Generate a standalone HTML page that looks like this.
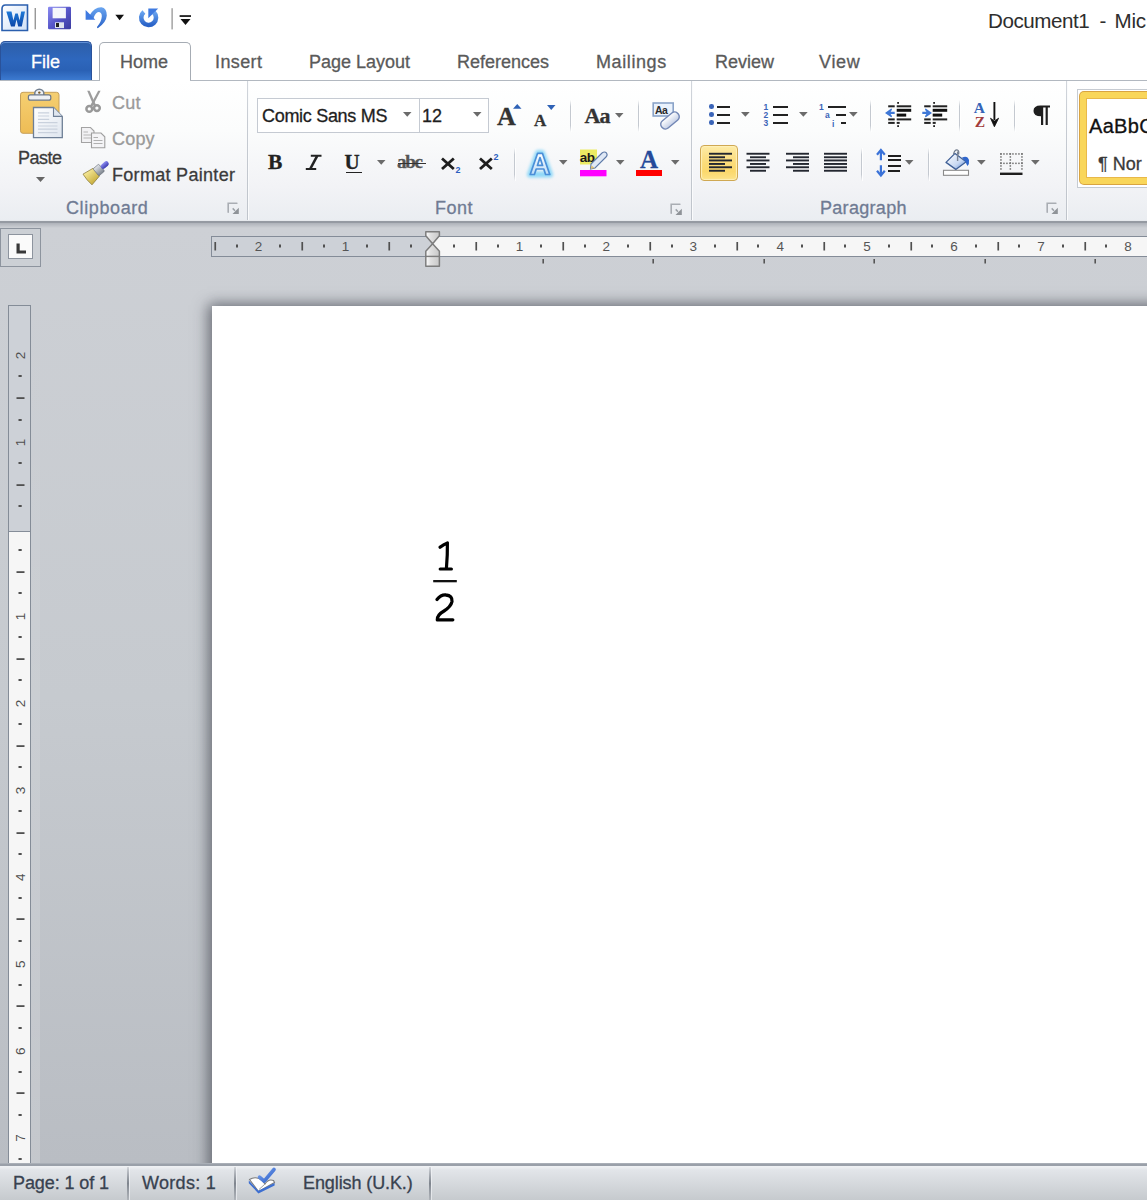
<!DOCTYPE html>
<html><head><meta charset="utf-8">
<style>
html,body{margin:0;padding:0;}
body{width:1147px;height:1200px;position:relative;overflow:hidden;background:#fff;font-family:"Liberation Sans",sans-serif;}
.a{position:absolute;}
.t{position:absolute;white-space:pre;line-height:1;font-size:18px;-webkit-text-stroke:0.3px currentColor;}
svg{position:absolute;overflow:visible;}
</style></head><body>

<!-- ===== TITLE BAR ===== -->
<div class="a" style="left:0;top:0;width:1147px;height:41px;background:#fff;"></div>
<svg style="left:0;top:0" width="200" height="40">
<defs>
<linearGradient id="wbg" x1="0" y1="0" x2="1" y2="1"><stop offset="0" stop-color="#ffffff"/><stop offset="1" stop-color="#cfe0f7"/></linearGradient>
<linearGradient id="wW" x1="0" y1="0" x2="0" y2="1"><stop offset="0" stop-color="#1f7ad8"/><stop offset="1" stop-color="#0d47a8"/></linearGradient>
<linearGradient id="sav" x1="0" y1="0" x2="1" y2="1"><stop offset="0" stop-color="#8c8cf2"/><stop offset="0.5" stop-color="#5757c9"/><stop offset="1" stop-color="#3a3a9e"/></linearGradient>
<linearGradient id="und" x1="0" y1="0" x2="0" y2="1"><stop offset="0" stop-color="#6aa5f0"/><stop offset="1" stop-color="#2a63c8"/></linearGradient>
</defs>
<path d="M5.5 5 H27.5 V30.5 H2 V9 Q2 5 5.5 5 Z" fill="url(#wbg)" stroke="#2b5fae" stroke-width="1.6"/>
<path d="M6.3 11.5 H11.5 L13.4 20.5 L15.3 13.5 H17.8 L19.6 20.5 L21.2 11.5 H25 L21.8 26.5 H18.2 L16.5 19.5 L14.8 26.5 H11 Z" fill="url(#wW)"/>
<rect x="34.6" y="8" width="1.3" height="21.3" fill="#8e8e8e"/>
<rect x="48" y="6.8" width="23" height="22.5" rx="1.2" fill="url(#sav)"/>
<rect x="52.6" y="7.8" width="13.3" height="10.5" fill="#f4f6fb"/>
<rect x="55" y="22.3" width="9" height="5.8" fill="#dfe3ee"/>
<rect x="56" y="23" width="3" height="4" fill="#222"/>
<path d="M89.5 15.5 Q94.5 7 101.5 7.3 Q106.8 8 106.8 15.5 Q106.3 22.5 97.8 28.2 Q96.8 28 97 27 Q101.5 21.5 101.8 16.5 Q101.9 12.2 98.5 12 Q95.5 12 93.5 18.5 Z" fill="url(#und)"/>
<path d="M85.6 10 V19.8 H95.4 Z" fill="#3f7ae0"/>
<path d="M115.3 14.7 H124 L119.65 20.2 Z" fill="#111"/>
<path d="M143.9 11.9 A7.4 7.4 0 1 0 153.9 12.4" fill="none" stroke="url(#und)" stroke-width="4.6"/>
<path d="M148.3 8.6 H158.2 L148.3 18.2 Z" fill="#3f7ae0"/>
<rect x="171.5" y="8.2" width="1.2" height="21.2" fill="#8e8e8e"/>
<rect x="179.6" y="15.2" width="11.4" height="1.7" fill="#111"/>
<path d="M180.5 19 H190.5 L185.5 25 Z" fill="#111"/>
</svg>
<div class="t" style="left:988px;top:11px;font-size:20.6px;color:#2e2e2e;letter-spacing:-0.45px;-webkit-text-stroke:0;">Document1</div>
<div class="t" style="left:1099.5px;top:11px;font-size:20.6px;color:#2e2e2e;-webkit-text-stroke:0;">-</div>
<div class="t" style="left:1114.5px;top:11px;font-size:20.6px;color:#2e2e2e;letter-spacing:-0.2px;-webkit-text-stroke:0;">Mic</div>


<!-- ===== TABS ===== -->
<div class="a" style="left:0;top:41px;width:92px;height:39px;border-radius:5px 5px 0 0;background:linear-gradient(#2d5ea8 0%,#2e67bd 45%,#2a61b5 75%,#3c7ad0 100%);box-shadow:inset 0 1px 0 #5f8fd6;border:1px solid #2a529a;border-bottom:none;box-sizing:border-box;"></div>
<div class="t" style="left:31px;top:53px;font-size:18px;color:#ffffff;">File</div>
<div class="a" style="left:99px;top:42px;width:92px;height:39px;border-radius:5px 5px 0 0;background:#fff;border:1px solid #a6acb4;border-bottom:none;box-sizing:border-box;"></div>
<div class="t" style="left:120px;top:53px;font-size:18px;color:#5a5a5a;">Home</div>
<div class="t" style="left:215px;top:53px;font-size:18px;color:#5a5a5a;letter-spacing:0.4px;">Insert</div>
<div class="t" style="left:309px;top:53px;font-size:18px;color:#5a5a5a;letter-spacing:0px;">Page Layout</div>
<div class="t" style="left:457px;top:53px;font-size:18px;color:#5a5a5a;letter-spacing:0px;">References</div>
<div class="t" style="left:596px;top:53px;font-size:18px;color:#5a5a5a;letter-spacing:0.6px;">Mailings</div>
<div class="t" style="left:715px;top:53px;font-size:18px;color:#5a5a5a;letter-spacing:0px;">Review</div>
<div class="t" style="left:819px;top:53px;font-size:18px;color:#5a5a5a;letter-spacing:0.7px;">View</div>


<!-- ===== RIBBON ===== -->
<div class="a" style="left:0;top:80px;width:1147px;height:141px;background:linear-gradient(#ffffff 0%,#fbfcfc 35%,#f2f3f6 75%,#eaedf1 100%);border-top:1px solid #b2b8c0;box-sizing:border-box;"></div>
<div class="a" style="left:100px;top:79px;width:90px;height:2px;background:#fff;"></div>
<div class="a" style="left:0;top:220px;width:1147px;height:1px;background:#e6e9ed;"></div>
<div class="a" style="left:0;top:221px;width:1147px;height:2px;background:#959aa2;"></div>
<div class="a" style="left:0;top:223px;width:1147px;height:5px;background:linear-gradient(#aeb2b9,#cdd0d5);"></div>
<div class="a" style="left:247px;top:81px;width:1px;height:139px;background:linear-gradient(#d2d6dc,#c6cbd2 30%,#bfc4cb);"></div><div class="a" style="left:248px;top:81px;width:1px;height:139px;background:#fafbfc;"></div>
<div class="a" style="left:691px;top:81px;width:1px;height:139px;background:linear-gradient(#d2d6dc,#c6cbd2 30%,#bfc4cb);"></div><div class="a" style="left:692px;top:81px;width:1px;height:139px;background:#fafbfc;"></div>
<div class="a" style="left:1066px;top:81px;width:1px;height:139px;background:linear-gradient(#d2d6dc,#c6cbd2 30%,#bfc4cb);"></div><div class="a" style="left:1067px;top:81px;width:1px;height:139px;background:#fafbfc;"></div>
<svg style="left:0;top:85px" width="80" height="60">
<defs><linearGradient id="clp" x1="0" y1="0" x2="0" y2="1"><stop offset="0" stop-color="#f5cf72"/><stop offset="1" stop-color="#eebc55"/></linearGradient>
<linearGradient id="pap" x1="0" y1="0" x2="1" y2="1"><stop offset="0" stop-color="#ffffff"/><stop offset="1" stop-color="#dfe6ef"/></linearGradient></defs>
<rect x="20.5" y="7.3" width="38.5" height="41" rx="2.5" fill="url(#clp)" stroke="#c6a05a" stroke-width="1"/>
<circle cx="39.3" cy="8.9" r="4.6" fill="#eef1f5" stroke="#738091" stroke-width="1.5"/>
<rect x="28.4" y="9.9" width="22.4" height="5.3" rx="2" fill="#eef1f5" stroke="#6c7889" stroke-width="1.2"/>
<circle cx="39.3" cy="7.6" r="1.2" fill="#7a5a2a"/>
<path d="M33.5 22.5 H53.5 L62.3 31.4 V52.6 H33.5 Z" fill="url(#pap)" stroke="#6e7f96" stroke-width="1.3"/>
<path d="M53.5 22.5 V31.4 H62.3" fill="#dfe6ef" stroke="#6e7f96" stroke-width="1.1"/>
<path d="M38 27.8 H49.2 M38 31 H49.2 M38 34.4 H49.2 M38 37.7 H57.5 M38 41 H57.5 M38 44.2 H57.5 M38 47.6 H57.5" stroke="#c9d1dd" stroke-width="1.2"/>
</svg>
<div class="t" style="left:18px;top:149px;font-size:18px;color:#3b3b3b;letter-spacing:-0.5px;">Paste</div>
<svg style="left:35.5px;top:176.5px" width="9" height="5"><path d="M0 0 H9 L4.5 5 Z" fill="#666"/></svg>
<svg style="left:76px;top:86px" width="36" height="104">
<defs><linearGradient id="brs" x1="0" y1="0" x2="0" y2="1"><stop offset="0" stop-color="#f7ea9a"/><stop offset="1" stop-color="#c8ae3c"/></linearGradient>
<linearGradient id="fer" x1="0" y1="0" x2="0" y2="1"><stop offset="0" stop-color="#e4e7ec"/><stop offset="1" stop-color="#7d848e"/></linearGradient>
<linearGradient id="hdl" x1="0" y1="0" x2="0" y2="1"><stop offset="0" stop-color="#8c8cf0"/><stop offset="1" stop-color="#3d3db0"/></linearGradient></defs>
<path d="M11.2 4.8 H13.6 L20.2 19.5 L17.8 20.2 Z" fill="#9c9c9c"/>
<path d="M22.2 4.8 H24.6 L16.4 20.5 L14.2 19.5 Z" fill="#9c9c9c"/>
<circle cx="13.3" cy="22.9" r="2.9" fill="none" stroke="#999" stroke-width="2.5"/>
<circle cx="20.9" cy="22.1" r="2.9" fill="none" stroke="#999" stroke-width="2.5"/>
<path d="M5.5 41.5 H14.5 L18 45 V56.5 H5.5 Z" fill="#f2f2f4" stroke="#a3a3a3" stroke-width="1.1"/>
<path d="M7.5 46 H12 M7.5 49 H15.5 M7.5 52 H15.5" stroke="#b5b5b5" stroke-width="1.2"/>
<path d="M15.5 47 H25 L28.8 50.8 V61.8 H15.5 Z" fill="#f4f4f6" stroke="#9e9e9e" stroke-width="1.1"/>
<path d="M17.5 51.5 H22 M17.5 54.5 H26.5 M17.5 57.5 H26.5" stroke="#b0b0b0" stroke-width="1.2"/>
<g transform="translate(11.5 93.5) rotate(-40)">
<path d="M0 -7 L11.5 -5 L11.5 5 L0 7 Q-1 0 0 -7 Z" fill="url(#brs)" stroke="#8a7a38" stroke-width="0.7"/>
<rect x="11" y="-4.6" width="7.5" height="9.2" rx="1" fill="url(#fer)" stroke="#666c75" stroke-width="0.6"/>
<rect x="18" y="-2.5" width="9" height="5" rx="2.5" fill="url(#hdl)"/>
</g>
</svg>
<div class="t" style="left:112px;top:94px;font-size:18px;color:#9a9a9a;letter-spacing:0.3px;">Cut</div>
<div class="t" style="left:112px;top:130px;font-size:18px;color:#9a9a9a;letter-spacing:0.2px;">Copy</div>
<div class="t" style="left:112px;top:166px;font-size:18px;color:#3b3b3b;letter-spacing:0.3px;">Format Painter</div>
<div class="t" style="left:66px;top:199px;font-size:18px;color:#6f7b93;letter-spacing:0.6px;">Clipboard</div>
<svg style="left:227px;top:202px" width="14" height="14"><path d="M1.2 10.2 V1.3 H9.9" fill="none" stroke="#a9adb3" stroke-width="1.6" stroke-linecap="round"/><path d="M5.7 6.4 L8 8.7" stroke="#9ba0a6" stroke-width="1.5"/><path d="M5.5 12 L11.8 5.7 V12 Z" fill="#8f9398"/></svg>
<div class="a" style="left:257px;top:98px;width:232px;height:35px;border:1px solid #c5cad2;box-sizing:border-box;background:#fff;"></div>
<div class="a" style="left:419px;top:98px;width:1px;height:35px;background:#c5cad2;"></div>
<div class="t" style="left:262px;top:107px;font-size:18px;color:#1e1e1e;letter-spacing:-0.3px;">Comic Sans MS</div>
<svg style="left:402.5px;top:112px" width="8.5" height="4.8"><path d="M0 0 H8.5 L4.25 4.8 Z" fill="#6b6b6b"/></svg>
<div class="t" style="left:422px;top:107px;font-size:18px;color:#1e1e1e;">12</div>
<svg style="left:472.5px;top:112px" width="8.5" height="4.8"><path d="M0 0 H8.5 L4.25 4.8 Z" fill="#6b6b6b"/></svg>
<div class="t" style="left:497px;top:104px;font-family:'Liberation Serif';font-size:26px;font-weight:bold;color:#333;">A</div>
<svg style="left:513px;top:103.5px" width="9" height="5"><path d="M0 4.8 H8.5 L4.25 0 Z" fill="#2f62b6"/></svg>
<div class="t" style="left:534px;top:112px;font-family:'Liberation Serif';font-size:17px;font-weight:bold;color:#333;">A</div>
<svg style="left:547px;top:105px" width="9" height="5"><path d="M0 0 H8.5 L4.25 5 Z" fill="#2f62b6"/></svg>
<div class="a" style="left:570px;top:100px;width:1px;height:32px;background:linear-gradient(rgba(200,205,212,0),#c4c9d0 20%,#c4c9d0 80%,rgba(200,205,212,0));"></div><div class="a" style="left:571px;top:100px;width:1px;height:32px;background:rgba(255,255,255,0.8);"></div>
<div class="t" style="left:584.5px;top:105px;font-family:'Liberation Serif';font-size:22px;font-weight:bold;color:#333;letter-spacing:-1px;">Aa</div>
<svg style="left:615px;top:112.5px" width="8.5" height="4.8"><path d="M0 0 H8.5 L4.25 4.8 Z" fill="#6b6b6b"/></svg>
<div class="a" style="left:638px;top:100px;width:1px;height:32px;background:linear-gradient(rgba(200,205,212,0),#c4c9d0 20%,#c4c9d0 80%,rgba(200,205,212,0));"></div><div class="a" style="left:639px;top:100px;width:1px;height:32px;background:rgba(255,255,255,0.8);"></div>
<svg style="left:650px;top:100px" width="34" height="32">
<defs><linearGradient id="ers" x1="0" y1="0" x2="0" y2="1"><stop offset="0" stop-color="#ffffff"/><stop offset="1" stop-color="#c4cfe6"/></linearGradient></defs>
<rect x="3.2" y="3" width="20" height="13" fill="#eaf2fc" stroke="#8aa3c8" stroke-width="1.6"/>
<text x="5" y="13.8" font-family="Liberation Sans" font-size="10.5" font-weight="bold" fill="#2a2a2a" letter-spacing="-0.5">Aa</text>
<g transform="translate(20 20.5) rotate(-40)"><rect x="-10.5" y="-4.6" width="21" height="9.2" rx="4.2" fill="url(#ers)" stroke="#7287b5" stroke-width="1.4"/></g>
</svg>
<div class="t" style="left:268px;top:152px;font-family:'Liberation Serif';font-size:21.5px;font-weight:bold;color:#222;">B</div>
<svg style="left:300px;top:150px" width="30" height="26"><path d="M10.8 5.8 H21.5 M5.8 19 H16.2" stroke="#222" stroke-width="2"/><path d="M17.2 5.8 L10.2 19" stroke="#222" stroke-width="2.6"/></svg>
<div class="t" style="left:344.5px;top:152px;font-family:'Liberation Serif';font-size:21px;font-weight:bold;color:#222;">U</div>
<div class="a" style="left:346px;top:171.5px;width:15.5px;height:1.8px;background:#222;"></div>
<svg style="left:377px;top:160px" width="8.5" height="4.8"><path d="M0 0 H8.5 L4.25 4.8 Z" fill="#6b6b6b"/></svg>
<div class="t" style="left:397px;top:151.5px;font-family:'Liberation Serif';font-size:19px;font-weight:bold;color:#555;letter-spacing:-1.3px;">abc</div>
<div class="a" style="left:398px;top:162.5px;width:28px;height:1.6px;background:#333;"></div>
<svg style="left:430px;top:148px" width="80" height="30">
<path d="M12 10.5 L23.8 21 M23.8 10.5 L12 21" stroke="#1e1e1e" stroke-width="2.8"/>
<path d="M50 10.5 L61.8 21 M61.8 10.5 L50 21" stroke="#1e1e1e" stroke-width="2.8"/>
<text x="25.5" y="25" font-family="Liberation Sans" font-size="9" font-weight="bold" fill="#2b5fc0">2</text>
<text x="63.5" y="12" font-family="Liberation Sans" font-size="9" font-weight="bold" fill="#2b5fc0">2</text>
</svg>
<div class="a" style="left:514px;top:148px;width:1px;height:33px;background:linear-gradient(rgba(200,205,212,0),#c4c9d0 20%,#c4c9d0 80%,rgba(200,205,212,0));"></div><div class="a" style="left:515px;top:148px;width:1px;height:33px;background:rgba(255,255,255,0.8);"></div>
<svg style="left:525px;top:148px" width="34" height="32">
<defs><filter id="glow" x="-40%" y="-40%" width="180%" height="180%"><feGaussianBlur stdDeviation="1.8"/></filter>
<linearGradient id="tef" x1="0" y1="0" x2="0" y2="1"><stop offset="0" stop-color="#ffffff"/><stop offset="1" stop-color="#bcdcf7"/></linearGradient></defs>
<path d="M5 26.5 L13 5 H17 L25 26.5 Z" fill="none" stroke="#8fd8f8" stroke-width="6" filter="url(#glow)" stroke-linejoin="round"/>
<path d="M5.2 26.5 L12.6 5.3 H17.4 L24.8 26.5 H20.6 L18.8 21 H11.2 L9.4 26.5 Z M12.4 17.4 H17.6 L15 9.6 Z" fill="url(#tef)" fill-rule="evenodd" stroke="#4b8fd8" stroke-width="1.7" stroke-linejoin="round"/>
</svg>
<svg style="left:558.5px;top:160px" width="8.5" height="4.8"><path d="M0 0 H8.5 L4.25 4.8 Z" fill="#6b6b6b"/></svg>
<svg style="left:578px;top:148px" width="32" height="30">
<rect x="2" y="1.5" width="17" height="15" fill="#ebeb62"/>
<text x="1.8" y="14.2" font-family="Liberation Sans" font-size="13.5" font-weight="bold" fill="#1a1a1a" letter-spacing="-0.6">ab</text>
<path d="M13 16 L24 5 Q26.5 3 28.5 5 Q30 7 28 9 L17 20 L12.5 21 Z" fill="#dfe8f5" stroke="#5e7aa8" stroke-width="1.1"/>
<path d="M12.5 21 L13.5 17.5 L16.5 20 Z" fill="#e0c070"/>
<rect x="2" y="22" width="26.5" height="6.3" fill="#ff00ff"/>
</svg>
<svg style="left:616px;top:160px" width="8.5" height="4.8"><path d="M0 0 H8.5 L4.25 4.8 Z" fill="#6b6b6b"/></svg>
<div class="t" style="left:640px;top:147px;font-family:'Liberation Serif';font-size:25px;font-weight:bold;color:#254a9a;">A</div>
<div class="a" style="left:636px;top:170px;width:26px;height:6.3px;background:#f00;"></div>
<svg style="left:670.5px;top:160px" width="8.5" height="4.8"><path d="M0 0 H8.5 L4.25 4.8 Z" fill="#6b6b6b"/></svg>
<div class="t" style="left:435px;top:199px;font-size:18px;color:#6f7b93;letter-spacing:0.5px;">Font</div>
<svg style="left:670px;top:203px" width="14" height="14"><path d="M1.2 10.2 V1.3 H9.9" fill="none" stroke="#a9adb3" stroke-width="1.6" stroke-linecap="round"/><path d="M5.7 6.4 L8 8.7" stroke="#9ba0a6" stroke-width="1.5"/><path d="M5.5 12 L11.8 5.7 V12 Z" fill="#8f9398"/></svg>
<div class="a" style="left:709px;top:104.0px;width:4.5px;height:4.5px;border-radius:50%;background:#3a64b8;"></div><div class="a" style="left:709px;top:112.0px;width:4.5px;height:4.5px;border-radius:50%;background:#3a64b8;"></div><div class="a" style="left:709px;top:120.0px;width:4.5px;height:4.5px;border-radius:50%;background:#3a64b8;"></div><div class="a" style="left:717px;top:105.7px;width:13px;height:2.2px;background:#222;"></div><div class="a" style="left:717px;top:113.7px;width:13px;height:2.2px;background:#222;"></div><div class="a" style="left:717px;top:121.7px;width:13px;height:2.2px;background:#222;"></div>
<svg style="left:741.3px;top:112px" width="8.7" height="4.8"><path d="M0 0 H8.7 L4.35 4.8 Z" fill="#6b6b6b"/></svg>
<svg style="left:762px;top:102px" width="12" height="26"><g font-family="Liberation Sans" font-size="8.5" font-weight="bold" fill="#3a64b8"><text x="1.5" y="8">1</text><text x="1.5" y="16">2</text><text x="1.5" y="24">3</text></g></svg>
<div class="a" style="left:773px;top:105.7px;width:15px;height:2.2px;background:#222;"></div><div class="a" style="left:773px;top:113.7px;width:15px;height:2.2px;background:#222;"></div><div class="a" style="left:773px;top:121.7px;width:15px;height:2.2px;background:#222;"></div>
<svg style="left:799.4px;top:112px" width="8.7" height="4.8"><path d="M0 0 H8.7 L4.35 4.8 Z" fill="#6b6b6b"/></svg>
<svg style="left:817px;top:100px" width="30" height="30"><g font-family="Liberation Sans" font-size="8.5" font-weight="bold" fill="#3a64b8"><text x="2" y="10">1</text><text x="8" y="18">a</text><text x="15" y="26.5">i</text></g></svg>
<div class="a" style="left:827.5px;top:105.7px;width:18.0px;height:2.2px;background:#222;"></div><div class="a" style="left:836px;top:113.7px;width:10px;height:2.2px;background:#222;"></div><div class="a" style="left:841px;top:121.7px;width:5px;height:2.2px;background:#222;"></div>
<svg style="left:848.5px;top:112px" width="8.7" height="4.8"><path d="M0 0 H8.7 L4.35 4.8 Z" fill="#6b6b6b"/></svg>
<div class="a" style="left:870px;top:100px;width:1px;height:32px;background:linear-gradient(rgba(200,205,212,0),#c4c9d0 20%,#c4c9d0 80%,rgba(200,205,212,0));"></div><div class="a" style="left:871px;top:100px;width:1px;height:32px;background:rgba(255,255,255,0.8);"></div>
<svg style="left:884.3px;top:98px" width="32" height="32"><rect x="13.2" y="4" width="1.8" height="1.8" fill="#222"/><rect x="13.2" y="27.2" width="1.8" height="1.8" fill="#222"/><rect x="4.2" y="7.3" width="6.5" height="2" fill="#222"/><rect x="4.2" y="20.4" width="6.5" height="2" fill="#222"/><rect x="4.2" y="23.9" width="6.5" height="2" fill="#222"/><rect x="12.7" y="7.3" width="14.5" height="2" fill="#222"/><rect x="12.7" y="10.8" width="14.5" height="3" fill="#111"/><rect x="12.7" y="15.6" width="9.5" height="3" fill="#111"/><rect x="12.7" y="20.4" width="14.5" height="2" fill="#222"/><rect x="12.7" y="23.9" width="3" height="2" fill="#222"/><path d="M1 14.9 L7.2 10.5 Q8.5 10.8 7.8 12 L6.6 13.7 H10.7 V16.1 H6.6 L7.8 17.8 Q8.5 19 7.2 19.2 Z" fill="#3f78d6"/></svg>
<svg style="left:919.5px;top:98px" width="32" height="32"><rect x="13.2" y="4" width="1.8" height="1.8" fill="#222"/><rect x="13.2" y="27.2" width="1.8" height="1.8" fill="#222"/><rect x="4.2" y="7.3" width="6.5" height="2" fill="#222"/><rect x="4.2" y="20.4" width="6.5" height="2" fill="#222"/><rect x="4.2" y="23.9" width="6.5" height="2" fill="#222"/><rect x="12.7" y="7.3" width="14.5" height="2" fill="#222"/><rect x="12.7" y="10.8" width="14.5" height="3" fill="#111"/><rect x="12.7" y="15.6" width="9.5" height="3" fill="#111"/><rect x="12.7" y="20.4" width="14.5" height="2" fill="#222"/><rect x="12.7" y="23.9" width="3" height="2" fill="#222"/><path d="M12 14.9 L5.8 10.5 Q4.5 10.8 5.2 12 L6.4 13.7 H2.3 V16.1 H6.4 L5.2 17.8 Q4.5 19 5.8 19.2 Z" fill="#3f78d6"/></svg>
<div class="a" style="left:959px;top:100px;width:1px;height:32px;background:linear-gradient(rgba(200,205,212,0),#c4c9d0 20%,#c4c9d0 80%,rgba(200,205,212,0));"></div><div class="a" style="left:960px;top:100px;width:1px;height:32px;background:rgba(255,255,255,0.8);"></div>
<svg style="left:965px;top:96px" width="40" height="36">
<text x="8.7" y="17.4" font-family="Liberation Serif" font-size="15.5" font-weight="bold" fill="#3565b8">A</text>
<text x="9.8" y="30.8" font-family="Liberation Serif" font-size="15.5" font-weight="bold" fill="#a23c3c">Z</text>
<path d="M29.4 6 V24" stroke="#111" stroke-width="1.9"/>
<path d="M25.5 22.2 L29.4 30.8 L33.6 22.2 L29.4 25 Z" fill="#111" stroke="#111" stroke-width="0.8" stroke-linejoin="round"/>
</svg>
<div class="a" style="left:1014px;top:100px;width:1px;height:32px;background:linear-gradient(rgba(200,205,212,0),#c4c9d0 20%,#c4c9d0 80%,rgba(200,205,212,0));"></div><div class="a" style="left:1015px;top:100px;width:1px;height:32px;background:rgba(255,255,255,0.8);"></div>
<svg style="left:1031px;top:104px" width="22" height="24"><path d="M9.5 1.5 H19 V3.4 H16.8 V21 H14.6 V3.4 H12.2 V21 H10 V12.3 Q2.5 12.3 2.5 7 Q2.5 1.5 9.5 1.5 Z" fill="#1e1e1e"/></svg>
<div class="a" style="left:700px;top:145px;width:38px;height:36px;border-radius:4px;border:1px solid #c9a157;box-sizing:border-box;background:linear-gradient(#fdeba6,#fcdd7d 45%,#fbd86c 75%,#fde38a);box-shadow:inset 0 0 1px 1px #fff1b8;border-color:#cfa853;"></div>
<svg style="left:0;top:0" width="860" height="190"><rect x="709" y="152.8" width="23" height="1.9" fill="#232730"/><rect x="746.5" y="152.8" width="23.0" height="1.9" fill="#232730"/><rect x="786" y="152.8" width="23" height="1.9" fill="#232730"/><rect x="824" y="152.8" width="23" height="1.9" fill="#232730"/><rect x="709" y="156.3" width="16" height="1.9" fill="#232730"/><rect x="750" y="156.3" width="16" height="1.9" fill="#232730"/><rect x="793" y="156.3" width="16" height="1.9" fill="#232730"/><rect x="824" y="156.3" width="23" height="1.9" fill="#232730"/><rect x="709" y="159.5" width="23" height="1.9" fill="#232730"/><rect x="746.5" y="159.5" width="23.0" height="1.9" fill="#232730"/><rect x="786" y="159.5" width="23" height="1.9" fill="#232730"/><rect x="824" y="159.5" width="23" height="1.9" fill="#232730"/><rect x="709" y="163.0" width="16" height="1.9" fill="#232730"/><rect x="750" y="163.0" width="16" height="1.9" fill="#232730"/><rect x="793" y="163.0" width="16" height="1.9" fill="#232730"/><rect x="824" y="163.0" width="23" height="1.9" fill="#232730"/><rect x="709" y="166.3" width="23" height="1.9" fill="#232730"/><rect x="746.5" y="166.3" width="23.0" height="1.9" fill="#232730"/><rect x="786" y="166.3" width="23" height="1.9" fill="#232730"/><rect x="824" y="166.3" width="23" height="1.9" fill="#232730"/><rect x="709" y="169.8" width="16" height="1.9" fill="#232730"/><rect x="750" y="169.8" width="16" height="1.9" fill="#232730"/><rect x="793" y="169.8" width="16" height="1.9" fill="#232730"/><rect x="824" y="169.8" width="23" height="1.9" fill="#232730"/></svg>
<div class="a" style="left:861px;top:148px;width:1px;height:33px;background:linear-gradient(rgba(200,205,212,0),#c4c9d0 20%,#c4c9d0 80%,rgba(200,205,212,0));"></div><div class="a" style="left:862px;top:148px;width:1px;height:33px;background:rgba(255,255,255,0.8);"></div>
<svg style="left:870px;top:145px" width="40" height="35">
<defs><linearGradient id="lsa" x1="0" y1="0" x2="0" y2="1"><stop offset="0" stop-color="#5a90e8"/><stop offset="1" stop-color="#2a5fc8"/></linearGradient></defs>
<path d="M10.9 6 V15.3 M10.9 20.2 V29.5" stroke="#3a72d8" stroke-width="2.2"/>
<path d="M7 9.8 L10.9 5 L14.8 9.8 M7 25.7 L10.9 30.5 L14.8 25.7" fill="none" stroke="#3a72d8" stroke-width="2.2" stroke-linejoin="miter"/>
</svg>
<div class="a" style="left:888.2px;top:154.5px;width:13.199999999999932px;height:2.1px;background:#1f1f1f;"></div><div class="a" style="left:888.2px;top:159.3px;width:13.199999999999932px;height:2.1px;background:#1f1f1f;"></div><div class="a" style="left:888.2px;top:164.5px;width:13.199999999999932px;height:2.1px;background:#1f1f1f;"></div><div class="a" style="left:888.2px;top:169.5px;width:11.399999999999977px;height:2.1px;background:#1f1f1f;"></div>
<svg style="left:905px;top:160px" width="8.5" height="4.8"><path d="M0 0 H8.5 L4.25 4.8 Z" fill="#6b6b6b"/></svg>
<div class="a" style="left:928px;top:148px;width:1px;height:33px;background:linear-gradient(rgba(200,205,212,0),#c4c9d0 20%,#c4c9d0 80%,rgba(200,205,212,0));"></div><div class="a" style="left:929px;top:148px;width:1px;height:33px;background:rgba(255,255,255,0.8);"></div>
<svg style="left:940px;top:145px" width="34" height="34">
<defs><linearGradient id="bkt" x1="0" y1="0" x2="1" y2="1"><stop offset="0" stop-color="#ffffff"/><stop offset="0.6" stop-color="#c9d9f2"/><stop offset="1" stop-color="#4f7fd0"/></linearGradient></defs>
<rect x="3.5" y="25.3" width="25" height="5" fill="#fff" stroke="#8a8a8a" stroke-width="1.1"/>
<path d="M6 17.4 L15 8.4 L26.2 16.7 L15.8 24.4 Z" fill="url(#bkt)" stroke="#3f5f95" stroke-width="1.3" stroke-linejoin="round"/>
<path d="M13.5 9.5 Q14.5 4.5 17.5 5 Q19.5 6 18.5 9.5" fill="none" stroke="#707b8c" stroke-width="1.2"/>
<path d="M17.6 6.5 V16" stroke="#7a8494" stroke-width="1.4"/>
<path d="M22 12.5 Q27.5 10 29 15 Q29.5 19 27.5 21 Q26 18.5 25.5 16.5 Z" fill="#2f66cc"/>
</svg>
<svg style="left:977px;top:160px" width="8.7" height="4.8"><path d="M0 0 H8.7 L4.35 4.8 Z" fill="#6b6b6b"/></svg>
<svg style="left:999px;top:152px" width="26" height="26"><rect x="1.2" y="1.2" width="1.5" height="1.5" fill="#6f6f6f"/><rect x="1.2" y="10.6" width="1.5" height="1.5" fill="#6f6f6f"/><rect x="4.2" y="1.2" width="1.5" height="1.5" fill="#6f6f6f"/><rect x="4.2" y="10.6" width="1.5" height="1.5" fill="#6f6f6f"/><rect x="7.2" y="1.2" width="1.5" height="1.5" fill="#6f6f6f"/><rect x="7.2" y="10.6" width="1.5" height="1.5" fill="#6f6f6f"/><rect x="10.2" y="1.2" width="1.5" height="1.5" fill="#6f6f6f"/><rect x="10.2" y="10.6" width="1.5" height="1.5" fill="#6f6f6f"/><rect x="13.2" y="1.2" width="1.5" height="1.5" fill="#6f6f6f"/><rect x="13.2" y="10.6" width="1.5" height="1.5" fill="#6f6f6f"/><rect x="16.2" y="1.2" width="1.5" height="1.5" fill="#6f6f6f"/><rect x="16.2" y="10.6" width="1.5" height="1.5" fill="#6f6f6f"/><rect x="19.2" y="1.2" width="1.5" height="1.5" fill="#6f6f6f"/><rect x="19.2" y="10.6" width="1.5" height="1.5" fill="#6f6f6f"/><rect x="22.2" y="1.2" width="1.5" height="1.5" fill="#6f6f6f"/><rect x="22.2" y="10.6" width="1.5" height="1.5" fill="#6f6f6f"/><rect x="1.2" y="1.2" width="1.5" height="1.5" fill="#6f6f6f"/><rect x="10.6" y="1.2" width="1.5" height="1.5" fill="#6f6f6f"/><rect x="22.2" y="1.2" width="1.5" height="1.5" fill="#6f6f6f"/><rect x="1.2" y="4.2" width="1.5" height="1.5" fill="#6f6f6f"/><rect x="10.6" y="4.2" width="1.5" height="1.5" fill="#6f6f6f"/><rect x="22.2" y="4.2" width="1.5" height="1.5" fill="#6f6f6f"/><rect x="1.2" y="7.2" width="1.5" height="1.5" fill="#6f6f6f"/><rect x="10.6" y="7.2" width="1.5" height="1.5" fill="#6f6f6f"/><rect x="22.2" y="7.2" width="1.5" height="1.5" fill="#6f6f6f"/><rect x="1.2" y="10.2" width="1.5" height="1.5" fill="#6f6f6f"/><rect x="10.6" y="10.2" width="1.5" height="1.5" fill="#6f6f6f"/><rect x="22.2" y="10.2" width="1.5" height="1.5" fill="#6f6f6f"/><rect x="1.2" y="13.2" width="1.5" height="1.5" fill="#6f6f6f"/><rect x="10.6" y="13.2" width="1.5" height="1.5" fill="#6f6f6f"/><rect x="22.2" y="13.2" width="1.5" height="1.5" fill="#6f6f6f"/><rect x="1.2" y="16.2" width="1.5" height="1.5" fill="#6f6f6f"/><rect x="10.6" y="16.2" width="1.5" height="1.5" fill="#6f6f6f"/><rect x="22.2" y="16.2" width="1.5" height="1.5" fill="#6f6f6f"/><rect x="1" y="20.6" width="22.5" height="2.4" fill="#1e1e1e"/></svg>
<svg style="left:1031.3px;top:160px" width="8.7" height="4.8"><path d="M0 0 H8.7 L4.35 4.8 Z" fill="#6b6b6b"/></svg>
<div class="t" style="left:820px;top:199px;font-size:18px;color:#6f7b93;letter-spacing:0.3px;">Paragraph</div>
<svg style="left:1046px;top:202px" width="14" height="14"><path d="M1.2 10.2 V1.3 H9.9" fill="none" stroke="#a9adb3" stroke-width="1.6" stroke-linecap="round"/><path d="M5.7 6.4 L8 8.7" stroke="#9ba0a6" stroke-width="1.5"/><path d="M5.5 12 L11.8 5.7 V12 Z" fill="#8f9398"/></svg>
<div class="a" style="left:1077px;top:89px;width:80px;height:99px;border:1px solid #c6cbd2;box-sizing:border-box;background:#fff;"></div>
<div class="a" style="left:1080px;top:92px;width:80px;height:92px;border-radius:4px;border:6px solid #f9d65a;box-sizing:border-box;box-shadow:inset 0 0 0 1px #e8b84a, 0 0 0 1px #d9a441;background:#fff;"></div>
<div class="t" style="left:1089px;top:116px;font-size:20px;color:#111;letter-spacing:0.3px;">AaBbC</div>
<div class="t" style="left:1098px;top:155px;font-size:18px;color:#3a3a3a;">¶ Nor</div>


<!-- ===== WORKSPACE ===== -->
<div class="a" style="left:0;top:228px;width:1147px;height:936px;background:linear-gradient(#cdd0d5 0%,#c6cacf 50%,#b9bdc3 100%);"></div>
<div class="a" style="left:31px;top:305px;width:9px;height:858px;background:linear-gradient(rgba(255,255,255,0),rgba(255,255,255,0.16));"></div>
<div class="a" style="left:8px;top:305px;width:23px;height:870px;border:1.5px solid #848c97;border-bottom:none;box-sizing:border-box;background:#f6f6f6;"></div>
<div class="a" style="left:9px;top:306px;width:21px;height:225px;background:#cdd1d7;"></div>
<div class="a" style="left:9px;top:531px;width:21px;height:1px;background:#858d99;"></div>
<svg style="left:0;top:0" width="60" height="1200"><text transform="translate(25.2 355.6) rotate(-90)" x="0" y="0" text-anchor="middle" font-family="Liberation Sans" font-size="13.5" fill="#4f4f4f">2</text><rect x="18.5" y="375.0" width="3.2" height="2" fill="#505050"/><rect x="16.5" y="397.2" width="8" height="1.8" fill="#505050"/><rect x="18.5" y="419.0" width="3.2" height="2" fill="#505050"/><text transform="translate(25.2 442.6) rotate(-90)" x="0" y="0" text-anchor="middle" font-family="Liberation Sans" font-size="13.5" fill="#4f4f4f">1</text><rect x="18.5" y="462.0" width="3.2" height="2" fill="#505050"/><rect x="16.5" y="484.2" width="8" height="1.8" fill="#505050"/><rect x="18.5" y="505.0" width="3.2" height="2" fill="#505050"/><rect x="18.5" y="549.0" width="3.2" height="2" fill="#505050"/><rect x="16.5" y="571.2" width="8" height="1.8" fill="#505050"/><rect x="18.5" y="592.0" width="3.2" height="2" fill="#505050"/><text transform="translate(25.2 616.5) rotate(-90)" x="0" y="0" text-anchor="middle" font-family="Liberation Sans" font-size="13.5" fill="#4f4f4f">1</text><rect x="18.5" y="636.0" width="3.2" height="2" fill="#505050"/><rect x="16.5" y="658.2" width="8" height="1.8" fill="#505050"/><rect x="18.5" y="679.0" width="3.2" height="2" fill="#505050"/><text transform="translate(25.2 703.4) rotate(-90)" x="0" y="0" text-anchor="middle" font-family="Liberation Sans" font-size="13.5" fill="#4f4f4f">2</text><rect x="18.5" y="723.0" width="3.2" height="2" fill="#505050"/><rect x="16.5" y="745.2" width="8" height="1.8" fill="#505050"/><rect x="18.5" y="766.0" width="3.2" height="2" fill="#505050"/><text transform="translate(25.2 790.4) rotate(-90)" x="0" y="0" text-anchor="middle" font-family="Liberation Sans" font-size="13.5" fill="#4f4f4f">3</text><rect x="18.5" y="810.0" width="3.2" height="2" fill="#505050"/><rect x="16.5" y="832.2" width="8" height="1.8" fill="#505050"/><rect x="18.5" y="853.0" width="3.2" height="2" fill="#505050"/><text transform="translate(25.2 877.3) rotate(-90)" x="0" y="0" text-anchor="middle" font-family="Liberation Sans" font-size="13.5" fill="#4f4f4f">4</text><rect x="18.5" y="897.0" width="3.2" height="2" fill="#505050"/><rect x="16.5" y="918.2" width="8" height="1.8" fill="#505050"/><rect x="18.5" y="940.0" width="3.2" height="2" fill="#505050"/><text transform="translate(25.2 964.2) rotate(-90)" x="0" y="0" text-anchor="middle" font-family="Liberation Sans" font-size="13.5" fill="#4f4f4f">5</text><rect x="18.5" y="984.0" width="3.2" height="2" fill="#505050"/><rect x="16.5" y="1005.2" width="8" height="1.8" fill="#505050"/><rect x="18.5" y="1027.0" width="3.2" height="2" fill="#505050"/><text transform="translate(25.2 1051.2) rotate(-90)" x="0" y="0" text-anchor="middle" font-family="Liberation Sans" font-size="13.5" fill="#4f4f4f">6</text><rect x="18.5" y="1071.0" width="3.2" height="2" fill="#505050"/><rect x="16.5" y="1092.2" width="8" height="1.8" fill="#505050"/><rect x="18.5" y="1114.0" width="3.2" height="2" fill="#505050"/><text transform="translate(25.2 1138.1) rotate(-90)" x="0" y="0" text-anchor="middle" font-family="Liberation Sans" font-size="13.5" fill="#4f4f4f">7</text><rect x="18.5" y="1158.0" width="3.2" height="2" fill="#505050"/></svg>
<div class="a" style="left:212px;top:306px;width:1000px;height:900px;background:#fff;box-shadow:-5px -1px 13px rgba(55,60,70,0.5), 0 -4px 11px rgba(55,60,70,0.24);"></div>
<svg style="left:425px;top:535px" width="40" height="95">
<path d="M15 12.3 Q18.5 9.3 22.4 7.9 Q22.6 20 21.4 33.6 M15.2 34 H26.4" fill="none" stroke="#000" stroke-width="3.2" stroke-linecap="round" stroke-linejoin="round"/>
<rect x="8.2" y="45" width="23.6" height="2.3" fill="#111"/>
<path d="M12 64.5 Q16 59.5 21 60 Q27.5 60.5 27 66.5 Q26 71.5 19 76 Q12 80 12.3 84.8 H27.8" fill="none" stroke="#000" stroke-width="3.3" stroke-linecap="round" stroke-linejoin="round"/>
</svg>
<div class="a" style="left:211px;top:236px;width:940px;height:21px;border:1px solid #848c98;box-sizing:border-box;background:#f6f6f6;"></div>
<div class="a" style="left:212px;top:237px;width:220px;height:19px;background:#cdd1d7;"></div>
<svg style="left:0;top:0" width="1147" height="300"><rect x="214.4" y="242" width="1.7" height="8.5" fill="#505050"/><rect x="236.0" y="244.5" width="2" height="3" fill="#505050"/><text x="258.5" y="251.3" text-anchor="middle" font-family="Liberation Sans" font-size="13.5" fill="#555">2</text><rect x="279.0" y="244.5" width="2" height="3" fill="#505050"/><rect x="301.4" y="242" width="1.7" height="8.5" fill="#505050"/><rect x="323.0" y="244.5" width="2" height="3" fill="#505050"/><text x="345.4" y="251.3" text-anchor="middle" font-family="Liberation Sans" font-size="13.5" fill="#555">1</text><rect x="366.0" y="244.5" width="2" height="3" fill="#505050"/><rect x="388.4" y="242" width="1.7" height="8.5" fill="#505050"/><rect x="410.0" y="244.5" width="2" height="3" fill="#505050"/><rect x="453.0" y="244.5" width="2" height="3" fill="#505050"/><rect x="475.4" y="242" width="1.7" height="8.5" fill="#505050"/><rect x="497.0" y="244.5" width="2" height="3" fill="#505050"/><text x="519.4" y="251.3" text-anchor="middle" font-family="Liberation Sans" font-size="13.5" fill="#555">1</text><rect x="540.0" y="244.5" width="2" height="3" fill="#505050"/><rect x="562.4" y="242" width="1.7" height="8.5" fill="#505050"/><rect x="584.0" y="244.5" width="2" height="3" fill="#505050"/><text x="606.3" y="251.3" text-anchor="middle" font-family="Liberation Sans" font-size="13.5" fill="#555">2</text><rect x="627.0" y="244.5" width="2" height="3" fill="#505050"/><rect x="649.4" y="242" width="1.7" height="8.5" fill="#505050"/><rect x="671.0" y="244.5" width="2" height="3" fill="#505050"/><text x="693.2" y="251.3" text-anchor="middle" font-family="Liberation Sans" font-size="13.5" fill="#555">3</text><rect x="714.0" y="244.5" width="2" height="3" fill="#505050"/><rect x="736.4" y="242" width="1.7" height="8.5" fill="#505050"/><rect x="757.0" y="244.5" width="2" height="3" fill="#505050"/><text x="780.2" y="251.3" text-anchor="middle" font-family="Liberation Sans" font-size="13.5" fill="#555">4</text><rect x="801.0" y="244.5" width="2" height="3" fill="#505050"/><rect x="823.4" y="242" width="1.7" height="8.5" fill="#505050"/><rect x="844.0" y="244.5" width="2" height="3" fill="#505050"/><text x="867.1" y="251.3" text-anchor="middle" font-family="Liberation Sans" font-size="13.5" fill="#555">5</text><rect x="888.0" y="244.5" width="2" height="3" fill="#505050"/><rect x="910.4" y="242" width="1.7" height="8.5" fill="#505050"/><rect x="931.0" y="244.5" width="2" height="3" fill="#505050"/><text x="954.1" y="251.3" text-anchor="middle" font-family="Liberation Sans" font-size="13.5" fill="#555">6</text><rect x="975.0" y="244.5" width="2" height="3" fill="#505050"/><rect x="997.4" y="242" width="1.7" height="8.5" fill="#505050"/><rect x="1018.0" y="244.5" width="2" height="3" fill="#505050"/><text x="1041.0" y="251.3" text-anchor="middle" font-family="Liberation Sans" font-size="13.5" fill="#555">7</text><rect x="1062.0" y="244.5" width="2" height="3" fill="#505050"/><rect x="1084.4" y="242" width="1.7" height="8.5" fill="#505050"/><rect x="1105.0" y="244.5" width="2" height="3" fill="#505050"/><text x="1128.0" y="251.3" text-anchor="middle" font-family="Liberation Sans" font-size="13.5" fill="#555">8</text><rect x="542.4" y="259" width="1.6" height="4.5" fill="#555"/><rect x="652.4" y="259" width="1.6" height="4.5" fill="#555"/><rect x="763.4" y="259" width="1.6" height="4.5" fill="#555"/><rect x="873.4" y="259" width="1.6" height="4.5" fill="#555"/><rect x="984.4" y="259" width="1.6" height="4.5" fill="#555"/><rect x="1094.4" y="259" width="1.6" height="4.5" fill="#555"/><defs><linearGradient id="im" x1="0" y1="0" x2="1" y2="0"><stop offset="0" stop-color="#ffffff"/><stop offset="0.35" stop-color="#e0e0e0"/><stop offset="1" stop-color="#c8c8c8"/></linearGradient></defs>
<path d="M425.8 231.7 H439.4 V235.8 L432.6 243.7 L439.4 251.2 V266.3 H425.8 V251.2 L432.6 243.7 L425.8 235.8 Z" fill="url(#im)" stroke="#7d7d7d" stroke-width="1.5" stroke-linejoin="round"/>
<path d="M425.8 256.4 H439.4" stroke="#7d7d7d" stroke-width="1.4"/></svg>
<div class="a" style="left:0px;top:227.5px;width:41px;height:39px;border:1.5px solid #8d949e;box-sizing:border-box;background:#ccd0d5;"></div>
<div class="a" style="left:8px;top:234px;width:25px;height:25px;border:1.5px solid #8d949e;box-sizing:border-box;background:#fafafa;"></div>
<svg style="left:0;top:0" width="50" height="270"><path d="M18.1 243.6 V252 H26" fill="none" stroke="#383838" stroke-width="3.2"/></svg>


<!-- ===== STATUS ===== -->
<div class="a" style="left:0;top:1163px;width:1147px;height:37px;background:linear-gradient(#b9bec5 0px,#9aa0a9 1px,#9aa0a9 2.5px,#eef1f4 3px,#eef0f3 4px,#e2e5e9 7px,#c6cace 100%);"></div>
<div class="a" style="left:127px;top:1167px;width:2px;height:33px;background:linear-gradient(rgba(120,126,135,0.2),#7f858e 50%,rgba(120,126,135,0.3));"></div><div class="a" style="left:129px;top:1167px;width:1px;height:33px;background:rgba(245,247,250,0.6);"></div>
<div class="a" style="left:234px;top:1167px;width:2px;height:33px;background:linear-gradient(rgba(120,126,135,0.2),#7f858e 50%,rgba(120,126,135,0.3));"></div><div class="a" style="left:236px;top:1167px;width:1px;height:33px;background:rgba(245,247,250,0.6);"></div>
<div class="a" style="left:429px;top:1167px;width:2px;height:33px;background:linear-gradient(rgba(120,126,135,0.2),#7f858e 50%,rgba(120,126,135,0.3));"></div><div class="a" style="left:431px;top:1167px;width:1px;height:33px;background:rgba(245,247,250,0.6);"></div>
<div class="t" style="left:13px;top:1174px;font-size:18px;color:#384250;letter-spacing:-0.1px;">Page: 1 of 1</div>
<div class="t" style="left:142px;top:1174px;font-size:18px;color:#384250;letter-spacing:0.3px;">Words: 1</div>
<div class="t" style="left:303px;top:1174px;font-size:18px;color:#384250;letter-spacing:-0.1px;">English (U.K.)</div>
<svg style="left:240px;top:1163px" width="45" height="36">
<defs><linearGradient id="chk" x1="0" y1="0" x2="1" y2="1"><stop offset="0" stop-color="#7aa3ee"/><stop offset="1" stop-color="#2c5fc9"/></linearGradient></defs>
<path d="M9.5 16.5 Q14 13.5 19 15.5 Q23 17.5 25 21 Q28.5 15.5 33.5 17.5 L34.5 19.5 L18.5 28.5 Z" fill="#ffffff" stroke="#7b7b7b" stroke-width="1.1"/>
<path d="M25 21 L19 26.5" stroke="#a0a0a0" stroke-width="1"/>
<path d="M8.8 17.6 L18.4 27.8 L34.6 20 L34.6 22.4 L18.4 30.4 L8.8 20.2 Z" fill="#3d6fd1"/>
<path d="M19.5 14.2 L24.2 18.2 L34 6.5" fill="none" stroke="url(#chk)" stroke-width="3.6" stroke-linecap="round" stroke-linejoin="round"/>
</svg>


</body></html>
